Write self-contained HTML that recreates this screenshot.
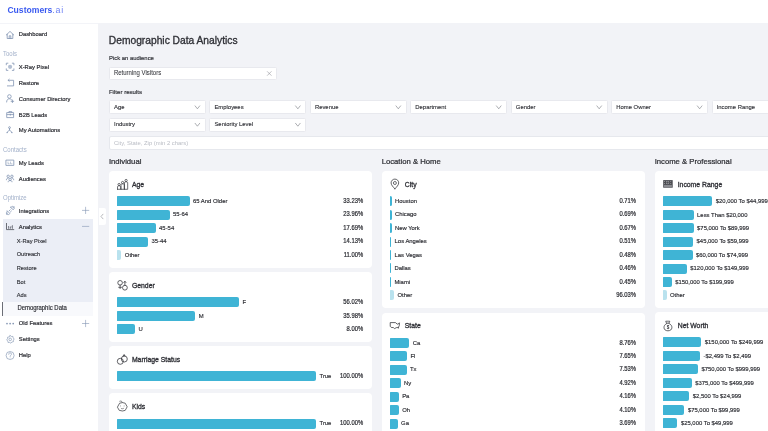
<!DOCTYPE html>
<html><head><meta charset="utf-8"><style>
html,body{margin:0;padding:0;width:768px;height:431px;overflow:hidden;background:#fff}
body{position:relative;font-family:"Liberation Sans", sans-serif}
.t{position:absolute;white-space:nowrap}
.r{position:absolute;display:block}
#w{position:absolute;left:0;top:0;width:768px;height:431px;will-change:transform}
</style></head><body><div id="w">
<div class="r" style="left:0.00px;top:0.00px;width:768.00px;height:431.00px;background:#ffffff;"></div>
<div class="r" style="left:98.00px;top:23.30px;width:670.00px;height:408.00px;background:#f2f3f7;"></div>
<div class="r" style="left:0.00px;top:22.80px;width:98.00px;height:0.80px;background:#f3f4f8;"></div>
<div class="t" style="left:7.4px;top:4px;font-size:8.6px;line-height:12.04px;font-weight:700;color:#3a5af0">Customers<span style="font-weight:400;color:#6f83f4;letter-spacing:0.75px;font-size:8.9px">.ai</span></div>
<div class="t" style="left:18.80px;top:30px;font-size:5.8px;line-height:8.12px;font-weight:400;color:#2f3036;-webkit-text-stroke:0.2px #2f3036;transform:scaleY(1.06);transform-origin:0 6px;">Dashboard</div>
<div class="t" style="left:3.00px;top:50px;font-size:6.0px;line-height:8.40px;font-weight:400;color:#a3b1ca;transform:scaleY(1.06);transform-origin:0 6px;">Tools</div>
<div class="t" style="left:18.80px;top:63px;font-size:5.8px;line-height:8.12px;font-weight:400;color:#2f3036;-webkit-text-stroke:0.2px #2f3036;transform:scaleY(1.06);transform-origin:0 6px;">X-Ray Pixel</div>
<div class="t" style="left:18.80px;top:79px;font-size:5.8px;line-height:8.12px;font-weight:400;color:#2f3036;-webkit-text-stroke:0.2px #2f3036;transform:scaleY(1.06);transform-origin:0 6px;">Restore</div>
<div class="t" style="left:18.80px;top:95px;font-size:5.8px;line-height:8.12px;font-weight:400;color:#2f3036;-webkit-text-stroke:0.2px #2f3036;transform:scaleY(1.06);transform-origin:0 6px;">Consumer Directory</div>
<div class="t" style="left:18.80px;top:111px;font-size:5.8px;line-height:8.12px;font-weight:400;color:#2f3036;-webkit-text-stroke:0.2px #2f3036;transform:scaleY(1.06);transform-origin:0 6px;">B2B Leads</div>
<div class="t" style="left:18.80px;top:126px;font-size:5.8px;line-height:8.12px;font-weight:400;color:#2f3036;-webkit-text-stroke:0.2px #2f3036;transform:scaleY(1.06);transform-origin:0 6px;">My Automations</div>
<div class="t" style="left:3.00px;top:146px;font-size:6.0px;line-height:8.40px;font-weight:400;color:#a3b1ca;transform:scaleY(1.06);transform-origin:0 6px;">Contacts</div>
<div class="t" style="left:18.80px;top:159px;font-size:5.8px;line-height:8.12px;font-weight:400;color:#2f3036;-webkit-text-stroke:0.2px #2f3036;transform:scaleY(1.06);transform-origin:0 6px;">My Leads</div>
<div class="t" style="left:18.80px;top:175px;font-size:5.8px;line-height:8.12px;font-weight:400;color:#2f3036;-webkit-text-stroke:0.2px #2f3036;transform:scaleY(1.06);transform-origin:0 6px;">Audiences</div>
<div class="t" style="left:3.00px;top:194px;font-size:6.0px;line-height:8.40px;font-weight:400;color:#a3b1ca;transform:scaleY(1.06);transform-origin:0 6px;">Optimize</div>
<div class="t" style="left:18.80px;top:207px;font-size:5.8px;line-height:8.12px;font-weight:400;color:#2f3036;-webkit-text-stroke:0.2px #2f3036;transform:scaleY(1.06);transform-origin:0 6px;">Integrations</div>
<div class="r" style="left:2.80px;top:218.90px;width:90.20px;height:82.90px;background:#ebeef6;"></div>
<div class="t" style="left:18.80px;top:223px;font-size:5.8px;line-height:8.12px;font-weight:400;color:#2f3036;-webkit-text-stroke:0.2px #2f3036;transform:scaleY(1.06);transform-origin:0 6px;">Analytics</div>
<div class="t" style="left:16.70px;top:238px;font-size:5.7px;line-height:7.98px;font-weight:400;color:#303238;-webkit-text-stroke:0.14px #303238;transform:scaleY(1.06);transform-origin:0 5px;">X-Ray Pixel</div>
<div class="t" style="left:16.70px;top:251px;font-size:5.7px;line-height:7.98px;font-weight:400;color:#303238;-webkit-text-stroke:0.14px #303238;transform:scaleY(1.06);transform-origin:0 5px;">Outreach</div>
<div class="t" style="left:16.70px;top:265px;font-size:5.7px;line-height:7.98px;font-weight:400;color:#303238;-webkit-text-stroke:0.14px #303238;transform:scaleY(1.06);transform-origin:0 5px;">Restore</div>
<div class="t" style="left:16.70px;top:279px;font-size:5.7px;line-height:7.98px;font-weight:400;color:#303238;-webkit-text-stroke:0.14px #303238;transform:scaleY(1.06);transform-origin:0 5px;">Bot</div>
<div class="t" style="left:16.70px;top:292px;font-size:5.7px;line-height:7.98px;font-weight:400;color:#303238;-webkit-text-stroke:0.14px #303238;transform:scaleY(1.06);transform-origin:0 5px;">Ads</div>
<div class="r" style="left:2.80px;top:301.80px;width:90.20px;height:13.90px;background:#f8f9fc;"></div>
<div class="r" style="left:2.10px;top:301.80px;width:1.20px;height:13.90px;background:#6b6e76;"></div>
<div class="t" style="left:17.40px;top:304px;font-size:5.95px;line-height:8.33px;font-weight:400;color:#2f3036;-webkit-text-stroke:0.17px #2f3036;transform:scaleY(1.06);transform-origin:0 6px;">Demographic Data</div>
<div class="t" style="left:18.80px;top:319px;font-size:5.8px;line-height:8.12px;font-weight:400;color:#2f3036;-webkit-text-stroke:0.2px #2f3036;transform:scaleY(1.06);transform-origin:0 6px;">Old Features</div>
<div class="t" style="left:18.80px;top:335px;font-size:5.8px;line-height:8.12px;font-weight:400;color:#2f3036;-webkit-text-stroke:0.2px #2f3036;transform:scaleY(1.06);transform-origin:0 6px;">Settings</div>
<div class="t" style="left:18.80px;top:351px;font-size:5.8px;line-height:8.12px;font-weight:400;color:#2f3036;-webkit-text-stroke:0.2px #2f3036;transform:scaleY(1.06);transform-origin:0 6px;">Help</div>
<div class="t" style="left:108.80px;top:34px;font-size:10.25px;line-height:14.35px;font-weight:400;color:#2f3036;-webkit-text-stroke:0.32px #2f3036;">Demographic Data Analytics</div>
<div class="t" style="left:109.00px;top:54px;font-size:5.9px;line-height:8.26px;font-weight:400;color:#2f3036;-webkit-text-stroke:0.17px #2f3036;transform:scaleY(1.06);transform-origin:0 6px;">Pick an audience</div>
<div class="r" style="left:109.00px;top:66.80px;width:168.00px;height:13.20px;background:#fff;border-radius:1.5px;border:0.6px solid #e8e9ee;box-sizing:border-box"></div>
<div class="t" style="left:113.90px;top:69px;font-size:6.0px;line-height:8.40px;font-weight:400;color:#34353b;-webkit-text-stroke:0.05px #34353b;transform:scaleY(1.06);transform-origin:0 6px;">Returning Visitors</div>
<div class="t" style="left:108.90px;top:88px;font-size:6.1px;line-height:8.54px;font-weight:400;color:#2f3036;-webkit-text-stroke:0.17px #2f3036;">Filter results</div>
<div class="r" style="left:108.90px;top:100.30px;width:97.00px;height:13.90px;background:#fff;border-radius:1.5px;border:0.6px solid #e8e9ee;box-sizing:border-box"></div>
<div class="t" style="left:114.00px;top:103px;font-size:5.9px;line-height:8.26px;font-weight:400;color:#2f3036;-webkit-text-stroke:0.12px #2f3036;transform:scaleY(1.06);transform-origin:0 6px;">Age</div>
<div class="r" style="left:209.35px;top:100.30px;width:97.00px;height:13.90px;background:#fff;border-radius:1.5px;border:0.6px solid #e8e9ee;box-sizing:border-box"></div>
<div class="t" style="left:214.45px;top:103px;font-size:5.9px;line-height:8.26px;font-weight:400;color:#2f3036;-webkit-text-stroke:0.12px #2f3036;transform:scaleY(1.06);transform-origin:0 6px;">Employees</div>
<div class="r" style="left:309.80px;top:100.30px;width:97.00px;height:13.90px;background:#fff;border-radius:1.5px;border:0.6px solid #e8e9ee;box-sizing:border-box"></div>
<div class="t" style="left:314.90px;top:103px;font-size:5.9px;line-height:8.26px;font-weight:400;color:#2f3036;-webkit-text-stroke:0.12px #2f3036;transform:scaleY(1.06);transform-origin:0 6px;">Revenue</div>
<div class="r" style="left:410.25px;top:100.30px;width:97.00px;height:13.90px;background:#fff;border-radius:1.5px;border:0.6px solid #e8e9ee;box-sizing:border-box"></div>
<div class="t" style="left:415.35px;top:103px;font-size:5.9px;line-height:8.26px;font-weight:400;color:#2f3036;-webkit-text-stroke:0.12px #2f3036;transform:scaleY(1.06);transform-origin:0 6px;">Department</div>
<div class="r" style="left:510.70px;top:100.30px;width:97.00px;height:13.90px;background:#fff;border-radius:1.5px;border:0.6px solid #e8e9ee;box-sizing:border-box"></div>
<div class="t" style="left:515.80px;top:103px;font-size:5.9px;line-height:8.26px;font-weight:400;color:#2f3036;-webkit-text-stroke:0.12px #2f3036;transform:scaleY(1.06);transform-origin:0 6px;">Gender</div>
<div class="r" style="left:611.15px;top:100.30px;width:97.00px;height:13.90px;background:#fff;border-radius:1.5px;border:0.6px solid #e8e9ee;box-sizing:border-box"></div>
<div class="t" style="left:616.25px;top:103px;font-size:5.9px;line-height:8.26px;font-weight:400;color:#2f3036;-webkit-text-stroke:0.12px #2f3036;transform:scaleY(1.06);transform-origin:0 6px;">Home Owner</div>
<div class="r" style="left:711.60px;top:100.30px;width:97.00px;height:13.90px;background:#fff;border-radius:1.5px;border:0.6px solid #e8e9ee;box-sizing:border-box"></div>
<div class="t" style="left:716.70px;top:103px;font-size:5.9px;line-height:8.26px;font-weight:400;color:#2f3036;-webkit-text-stroke:0.12px #2f3036;transform:scaleY(1.06);transform-origin:0 6px;">Income Range</div>
<div class="r" style="left:108.90px;top:117.70px;width:97.00px;height:13.90px;background:#fff;border-radius:1.5px;border:0.6px solid #e8e9ee;box-sizing:border-box"></div>
<div class="t" style="left:114.00px;top:120px;font-size:5.9px;line-height:8.26px;font-weight:400;color:#2f3036;-webkit-text-stroke:0.12px #2f3036;transform:scaleY(1.06);transform-origin:0 6px;">Industry</div>
<div class="r" style="left:209.35px;top:117.70px;width:97.00px;height:13.90px;background:#fff;border-radius:1.5px;border:0.6px solid #e8e9ee;box-sizing:border-box"></div>
<div class="t" style="left:214.45px;top:120px;font-size:5.9px;line-height:8.26px;font-weight:400;color:#2f3036;-webkit-text-stroke:0.12px #2f3036;transform:scaleY(1.06);transform-origin:0 6px;">Seniority Level</div>
<div class="r" style="left:108.90px;top:135.50px;width:700.00px;height:14.00px;background:#fff;border:0.6px solid #e6e8ed;box-sizing:border-box;border-radius:2px"></div>
<div class="t" style="left:114.00px;top:139px;font-size:5.9px;line-height:8.26px;font-weight:400;color:#b9bcc4;transform:scaleY(1.06);transform-origin:0 6px;">City, State, Zip (min 2 chars)</div>
<div class="r" style="left:98.80px;top:208.00px;width:7.00px;height:16.70px;background:#fff;border-radius:0 2px 2px 0"></div>
<div class="t" style="left:108.90px;top:157px;font-size:7.7px;line-height:10.78px;font-weight:400;color:#2f3036;-webkit-text-stroke:0.24px #2f3036;">Individual</div>
<div class="t" style="left:381.70px;top:157px;font-size:7.7px;line-height:10.78px;font-weight:400;color:#2f3036;-webkit-text-stroke:0.24px #2f3036;">Location &amp; Home</div>
<div class="t" style="left:654.70px;top:157px;font-size:7.7px;line-height:10.78px;font-weight:400;color:#2f3036;-webkit-text-stroke:0.24px #2f3036;">Income &amp; Professional</div>
<div class="r" style="left:108.90px;top:170.90px;width:262.80px;height:97.10px;background:#fff;border-radius:4px"></div>
<div class="t" style="left:131.90px;top:180px;font-size:6.85px;line-height:9.59px;font-weight:400;color:#2f3036;-webkit-text-stroke:0.3px #2f3036;transform:scaleY(1.06);transform-origin:0 7px;">Age</div>
<div class="r" style="left:117.10px;top:196.10px;width:72.50px;height:10.00px;background:#3fb4d5;border-radius:0.6px 2px 2px 0.6px"></div>
<div class="t" style="left:193.00px;top:197px;font-size:5.9px;line-height:8.26px;font-weight:400;color:#2a2b31;-webkit-text-stroke:0.15px #2a2b31;transform:scaleY(1.06);transform-origin:0 6px;">65 And Older</div>
<div class="t" style="right:404.90px;top:197px;font-size:5.85px;line-height:8.19px;font-weight:400;color:#2f3036;-webkit-text-stroke:0.2px #2f3036;transform:scaleY(1.18);transform-origin:50% 70%;">33.23%</div>
<div class="r" style="left:117.10px;top:209.57px;width:52.50px;height:10.00px;background:#3fb4d5;border-radius:0.6px 2px 2px 0.6px"></div>
<div class="t" style="left:173.00px;top:210px;font-size:5.9px;line-height:8.26px;font-weight:400;color:#2a2b31;-webkit-text-stroke:0.15px #2a2b31;transform:scaleY(1.06);transform-origin:0 6px;">55-64</div>
<div class="t" style="right:404.90px;top:210px;font-size:5.85px;line-height:8.19px;font-weight:400;color:#2f3036;-webkit-text-stroke:0.2px #2f3036;transform:scaleY(1.18);transform-origin:50% 70%;">23.96%</div>
<div class="r" style="left:117.10px;top:223.04px;width:38.60px;height:10.00px;background:#3fb4d5;border-radius:0.6px 2px 2px 0.6px"></div>
<div class="t" style="left:159.10px;top:224px;font-size:5.9px;line-height:8.26px;font-weight:400;color:#2a2b31;-webkit-text-stroke:0.15px #2a2b31;transform:scaleY(1.06);transform-origin:0 6px;">45-54</div>
<div class="t" style="right:404.90px;top:224px;font-size:5.85px;line-height:8.19px;font-weight:400;color:#2f3036;-webkit-text-stroke:0.2px #2f3036;transform:scaleY(1.18);transform-origin:50% 70%;">17.69%</div>
<div class="r" style="left:117.10px;top:236.51px;width:30.90px;height:10.00px;background:#3fb4d5;border-radius:0.6px 2px 2px 0.6px"></div>
<div class="t" style="left:151.40px;top:237px;font-size:5.9px;line-height:8.26px;font-weight:400;color:#2a2b31;-webkit-text-stroke:0.15px #2a2b31;transform:scaleY(1.06);transform-origin:0 6px;">35-44</div>
<div class="t" style="right:404.90px;top:237px;font-size:5.85px;line-height:8.19px;font-weight:400;color:#2f3036;-webkit-text-stroke:0.2px #2f3036;transform:scaleY(1.18);transform-origin:50% 70%;">14.13%</div>
<div class="r" style="left:117.10px;top:249.98px;width:4.30px;height:10.00px;background:#b9e2ee;border-radius:0.6px 2px 2px 0.6px"></div>
<div class="t" style="left:124.80px;top:251px;font-size:5.9px;line-height:8.26px;font-weight:400;color:#2a2b31;-webkit-text-stroke:0.15px #2a2b31;transform:scaleY(1.06);transform-origin:0 6px;">Other</div>
<div class="t" style="right:404.90px;top:251px;font-size:5.85px;line-height:8.19px;font-weight:400;color:#2f3036;-webkit-text-stroke:0.2px #2f3036;transform:scaleY(1.18);transform-origin:50% 70%;">11.00%</div>
<div class="r" style="left:108.90px;top:272.10px;width:262.80px;height:69.50px;background:#fff;border-radius:4px"></div>
<div class="t" style="left:131.90px;top:281px;font-size:6.85px;line-height:9.59px;font-weight:400;color:#2f3036;-webkit-text-stroke:0.3px #2f3036;transform:scaleY(1.06);transform-origin:0 7px;">Gender</div>
<div class="r" style="left:117.10px;top:297.30px;width:121.90px;height:10.00px;background:#3fb4d5;border-radius:0.6px 2px 2px 0.6px"></div>
<div class="t" style="left:242.40px;top:298px;font-size:5.9px;line-height:8.26px;font-weight:400;color:#2a2b31;-webkit-text-stroke:0.15px #2a2b31;transform:scaleY(1.06);transform-origin:0 6px;">F</div>
<div class="t" style="right:404.90px;top:298px;font-size:5.85px;line-height:8.19px;font-weight:400;color:#2f3036;-webkit-text-stroke:0.2px #2f3036;transform:scaleY(1.18);transform-origin:50% 70%;">56.02%</div>
<div class="r" style="left:117.10px;top:310.77px;width:78.30px;height:10.00px;background:#3fb4d5;border-radius:0.6px 2px 2px 0.6px"></div>
<div class="t" style="left:198.80px;top:312px;font-size:5.9px;line-height:8.26px;font-weight:400;color:#2a2b31;-webkit-text-stroke:0.15px #2a2b31;transform:scaleY(1.06);transform-origin:0 6px;">M</div>
<div class="t" style="right:404.90px;top:312px;font-size:5.85px;line-height:8.19px;font-weight:400;color:#2f3036;-webkit-text-stroke:0.2px #2f3036;transform:scaleY(1.18);transform-origin:50% 70%;">35.98%</div>
<div class="r" style="left:117.10px;top:324.24px;width:17.90px;height:10.00px;background:#3fb4d5;border-radius:0.6px 2px 2px 0.6px"></div>
<div class="t" style="left:138.40px;top:325px;font-size:5.9px;line-height:8.26px;font-weight:400;color:#2a2b31;-webkit-text-stroke:0.15px #2a2b31;transform:scaleY(1.06);transform-origin:0 6px;">U</div>
<div class="t" style="right:404.90px;top:325px;font-size:5.85px;line-height:8.19px;font-weight:400;color:#2f3036;-webkit-text-stroke:0.2px #2f3036;transform:scaleY(1.18);transform-origin:50% 70%;">8.00%</div>
<div class="r" style="left:108.90px;top:346.10px;width:262.80px;height:42.80px;background:#fff;border-radius:4px"></div>
<div class="t" style="left:131.90px;top:355px;font-size:6.85px;line-height:9.59px;font-weight:400;color:#2f3036;-webkit-text-stroke:0.3px #2f3036;transform:scaleY(1.06);transform-origin:0 7px;">Marriage Status</div>
<div class="r" style="left:117.10px;top:371.30px;width:199.00px;height:10.00px;background:#3fb4d5;border-radius:0.6px 2px 2px 0.6px"></div>
<div class="t" style="left:319.50px;top:372px;font-size:5.9px;line-height:8.26px;font-weight:400;color:#2a2b31;-webkit-text-stroke:0.15px #2a2b31;transform:scaleY(1.06);transform-origin:0 6px;">True</div>
<div class="t" style="right:404.90px;top:372px;font-size:5.85px;line-height:8.19px;font-weight:400;color:#2f3036;-webkit-text-stroke:0.2px #2f3036;transform:scaleY(1.18);transform-origin:50% 70%;">100.00%</div>
<div class="r" style="left:108.90px;top:393.40px;width:262.80px;height:60.00px;background:#fff;border-radius:4px"></div>
<div class="t" style="left:131.90px;top:402px;font-size:6.85px;line-height:9.59px;font-weight:400;color:#2f3036;-webkit-text-stroke:0.3px #2f3036;transform:scaleY(1.06);transform-origin:0 7px;">Kids</div>
<div class="r" style="left:117.10px;top:418.60px;width:199.00px;height:10.00px;background:#3fb4d5;border-radius:0.6px 2px 2px 0.6px"></div>
<div class="t" style="left:319.50px;top:419px;font-size:5.9px;line-height:8.26px;font-weight:400;color:#2a2b31;-webkit-text-stroke:0.15px #2a2b31;transform:scaleY(1.06);transform-origin:0 6px;">True</div>
<div class="t" style="right:404.90px;top:419px;font-size:5.85px;line-height:8.19px;font-weight:400;color:#2f3036;-webkit-text-stroke:0.2px #2f3036;transform:scaleY(1.18);transform-origin:50% 70%;">100.00%</div>
<div class="r" style="left:381.80px;top:170.90px;width:262.80px;height:137.50px;background:#fff;border-radius:4px"></div>
<div class="t" style="left:404.80px;top:180px;font-size:6.85px;line-height:9.59px;font-weight:400;color:#2f3036;-webkit-text-stroke:0.3px #2f3036;transform:scaleY(1.06);transform-origin:0 7px;">City</div>
<div class="r" style="left:390.00px;top:196.10px;width:1.60px;height:10.00px;background:#3fb4d5;border-radius:0.6px 2px 2px 0.6px"></div>
<div class="t" style="left:395.00px;top:197px;font-size:5.9px;line-height:8.26px;font-weight:400;color:#2a2b31;-webkit-text-stroke:0.15px #2a2b31;transform:scaleY(1.06);transform-origin:0 6px;">Houston</div>
<div class="t" style="right:132.00px;top:197px;font-size:5.85px;line-height:8.19px;font-weight:400;color:#2f3036;-webkit-text-stroke:0.2px #2f3036;transform:scaleY(1.18);transform-origin:50% 70%;">0.71%</div>
<div class="r" style="left:390.00px;top:209.57px;width:1.50px;height:10.00px;background:#3fb4d5;border-radius:0.6px 2px 2px 0.6px"></div>
<div class="t" style="left:394.90px;top:210px;font-size:5.9px;line-height:8.26px;font-weight:400;color:#2a2b31;-webkit-text-stroke:0.15px #2a2b31;transform:scaleY(1.06);transform-origin:0 6px;">Chicago</div>
<div class="t" style="right:132.00px;top:210px;font-size:5.85px;line-height:8.19px;font-weight:400;color:#2f3036;-webkit-text-stroke:0.2px #2f3036;transform:scaleY(1.18);transform-origin:50% 70%;">0.69%</div>
<div class="r" style="left:390.00px;top:223.04px;width:1.50px;height:10.00px;background:#3fb4d5;border-radius:0.6px 2px 2px 0.6px"></div>
<div class="t" style="left:394.90px;top:224px;font-size:5.9px;line-height:8.26px;font-weight:400;color:#2a2b31;-webkit-text-stroke:0.15px #2a2b31;transform:scaleY(1.06);transform-origin:0 6px;">New York</div>
<div class="t" style="right:132.00px;top:224px;font-size:5.85px;line-height:8.19px;font-weight:400;color:#2f3036;-webkit-text-stroke:0.2px #2f3036;transform:scaleY(1.18);transform-origin:50% 70%;">0.67%</div>
<div class="r" style="left:390.00px;top:236.51px;width:1.20px;height:10.00px;background:#3fb4d5;border-radius:0.6px 2px 2px 0.6px"></div>
<div class="t" style="left:394.60px;top:237px;font-size:5.9px;line-height:8.26px;font-weight:400;color:#2a2b31;-webkit-text-stroke:0.15px #2a2b31;transform:scaleY(1.06);transform-origin:0 6px;">Los Angeles</div>
<div class="t" style="right:132.00px;top:237px;font-size:5.85px;line-height:8.19px;font-weight:400;color:#2f3036;-webkit-text-stroke:0.2px #2f3036;transform:scaleY(1.18);transform-origin:50% 70%;">0.51%</div>
<div class="r" style="left:390.00px;top:249.98px;width:1.10px;height:10.00px;background:#3fb4d5;border-radius:0.6px 2px 2px 0.6px"></div>
<div class="t" style="left:394.50px;top:251px;font-size:5.9px;line-height:8.26px;font-weight:400;color:#2a2b31;-webkit-text-stroke:0.15px #2a2b31;transform:scaleY(1.06);transform-origin:0 6px;">Las Vegas</div>
<div class="t" style="right:132.00px;top:251px;font-size:5.85px;line-height:8.19px;font-weight:400;color:#2f3036;-webkit-text-stroke:0.2px #2f3036;transform:scaleY(1.18);transform-origin:50% 70%;">0.48%</div>
<div class="r" style="left:390.00px;top:263.45px;width:1.00px;height:10.00px;background:#3fb4d5;border-radius:0.6px 2px 2px 0.6px"></div>
<div class="t" style="left:394.40px;top:264px;font-size:5.9px;line-height:8.26px;font-weight:400;color:#2a2b31;-webkit-text-stroke:0.15px #2a2b31;transform:scaleY(1.06);transform-origin:0 6px;">Dallas</div>
<div class="t" style="right:132.00px;top:264px;font-size:5.85px;line-height:8.19px;font-weight:400;color:#2f3036;-webkit-text-stroke:0.2px #2f3036;transform:scaleY(1.18);transform-origin:50% 70%;">0.46%</div>
<div class="r" style="left:390.00px;top:276.92px;width:1.00px;height:10.00px;background:#3fb4d5;border-radius:0.6px 2px 2px 0.6px"></div>
<div class="t" style="left:394.40px;top:278px;font-size:5.9px;line-height:8.26px;font-weight:400;color:#2a2b31;-webkit-text-stroke:0.15px #2a2b31;transform:scaleY(1.06);transform-origin:0 6px;">Miami</div>
<div class="t" style="right:132.00px;top:278px;font-size:5.85px;line-height:8.19px;font-weight:400;color:#2f3036;-webkit-text-stroke:0.2px #2f3036;transform:scaleY(1.18);transform-origin:50% 70%;">0.45%</div>
<div class="r" style="left:390.00px;top:290.39px;width:4.10px;height:10.00px;background:#b9e2ee;border-radius:0.6px 2px 2px 0.6px"></div>
<div class="t" style="left:397.50px;top:291px;font-size:5.9px;line-height:8.26px;font-weight:400;color:#2a2b31;-webkit-text-stroke:0.15px #2a2b31;transform:scaleY(1.06);transform-origin:0 6px;">Other</div>
<div class="t" style="right:132.00px;top:291px;font-size:5.85px;line-height:8.19px;font-weight:400;color:#2f3036;-webkit-text-stroke:0.2px #2f3036;transform:scaleY(1.18);transform-origin:50% 70%;">96.03%</div>
<div class="r" style="left:381.80px;top:312.50px;width:262.80px;height:130.00px;background:#fff;border-radius:4px"></div>
<div class="t" style="left:404.80px;top:321px;font-size:6.85px;line-height:9.59px;font-weight:400;color:#2f3036;-webkit-text-stroke:0.3px #2f3036;transform:scaleY(1.06);transform-origin:0 7px;">State</div>
<div class="r" style="left:390.00px;top:337.70px;width:19.40px;height:10.00px;background:#3fb4d5;border-radius:0.6px 2px 2px 0.6px"></div>
<div class="t" style="left:412.80px;top:339px;font-size:5.9px;line-height:8.26px;font-weight:400;color:#2a2b31;-webkit-text-stroke:0.15px #2a2b31;transform:scaleY(1.06);transform-origin:0 6px;">Ca</div>
<div class="t" style="right:132.00px;top:339px;font-size:5.85px;line-height:8.19px;font-weight:400;color:#2f3036;-webkit-text-stroke:0.2px #2f3036;transform:scaleY(1.18);transform-origin:50% 70%;">8.76%</div>
<div class="r" style="left:390.00px;top:351.17px;width:17.10px;height:10.00px;background:#3fb4d5;border-radius:0.6px 2px 2px 0.6px"></div>
<div class="t" style="left:410.50px;top:352px;font-size:5.9px;line-height:8.26px;font-weight:400;color:#2a2b31;-webkit-text-stroke:0.15px #2a2b31;transform:scaleY(1.06);transform-origin:0 6px;">Fl</div>
<div class="t" style="right:132.00px;top:352px;font-size:5.85px;line-height:8.19px;font-weight:400;color:#2f3036;-webkit-text-stroke:0.2px #2f3036;transform:scaleY(1.18);transform-origin:50% 70%;">7.65%</div>
<div class="r" style="left:390.00px;top:364.64px;width:16.60px;height:10.00px;background:#3fb4d5;border-radius:0.6px 2px 2px 0.6px"></div>
<div class="t" style="left:410.00px;top:365px;font-size:5.9px;line-height:8.26px;font-weight:400;color:#2a2b31;-webkit-text-stroke:0.15px #2a2b31;transform:scaleY(1.06);transform-origin:0 6px;">Tx</div>
<div class="t" style="right:132.00px;top:365px;font-size:5.85px;line-height:8.19px;font-weight:400;color:#2f3036;-webkit-text-stroke:0.2px #2f3036;transform:scaleY(1.18);transform-origin:50% 70%;">7.53%</div>
<div class="r" style="left:390.00px;top:378.11px;width:10.70px;height:10.00px;background:#3fb4d5;border-radius:0.6px 2px 2px 0.6px"></div>
<div class="t" style="left:404.10px;top:379px;font-size:5.9px;line-height:8.26px;font-weight:400;color:#2a2b31;-webkit-text-stroke:0.15px #2a2b31;transform:scaleY(1.06);transform-origin:0 6px;">Ny</div>
<div class="t" style="right:132.00px;top:379px;font-size:5.85px;line-height:8.19px;font-weight:400;color:#2f3036;-webkit-text-stroke:0.2px #2f3036;transform:scaleY(1.18);transform-origin:50% 70%;">4.92%</div>
<div class="r" style="left:390.00px;top:391.58px;width:8.80px;height:10.00px;background:#3fb4d5;border-radius:0.6px 2px 2px 0.6px"></div>
<div class="t" style="left:402.20px;top:392px;font-size:5.9px;line-height:8.26px;font-weight:400;color:#2a2b31;-webkit-text-stroke:0.15px #2a2b31;transform:scaleY(1.06);transform-origin:0 6px;">Pa</div>
<div class="t" style="right:132.00px;top:392px;font-size:5.85px;line-height:8.19px;font-weight:400;color:#2f3036;-webkit-text-stroke:0.2px #2f3036;transform:scaleY(1.18);transform-origin:50% 70%;">4.16%</div>
<div class="r" style="left:390.00px;top:405.05px;width:8.80px;height:10.00px;background:#3fb4d5;border-radius:0.6px 2px 2px 0.6px"></div>
<div class="t" style="left:402.20px;top:406px;font-size:5.9px;line-height:8.26px;font-weight:400;color:#2a2b31;-webkit-text-stroke:0.15px #2a2b31;transform:scaleY(1.06);transform-origin:0 6px;">Oh</div>
<div class="t" style="right:132.00px;top:406px;font-size:5.85px;line-height:8.19px;font-weight:400;color:#2f3036;-webkit-text-stroke:0.2px #2f3036;transform:scaleY(1.18);transform-origin:50% 70%;">4.10%</div>
<div class="r" style="left:390.00px;top:418.52px;width:7.70px;height:10.00px;background:#3fb4d5;border-radius:0.6px 2px 2px 0.6px"></div>
<div class="t" style="left:401.10px;top:419px;font-size:5.9px;line-height:8.26px;font-weight:400;color:#2a2b31;-webkit-text-stroke:0.15px #2a2b31;transform:scaleY(1.06);transform-origin:0 6px;">Ga</div>
<div class="t" style="right:132.00px;top:419px;font-size:5.85px;line-height:8.19px;font-weight:400;color:#2f3036;-webkit-text-stroke:0.2px #2f3036;transform:scaleY(1.18);transform-origin:50% 70%;">3.69%</div>
<div class="r" style="left:654.70px;top:171.00px;width:262.80px;height:137.10px;background:#fff;border-radius:4px"></div>
<div class="t" style="left:677.70px;top:180px;font-size:6.85px;line-height:9.59px;font-weight:400;color:#2f3036;-webkit-text-stroke:0.3px #2f3036;transform:scaleY(1.06);transform-origin:0 7px;">Income Range</div>
<div class="r" style="left:662.90px;top:196.20px;width:49.50px;height:10.00px;background:#3fb4d5;border-radius:0.6px 2px 2px 0.6px"></div>
<div class="t" style="left:715.80px;top:197px;font-size:5.9px;line-height:8.26px;font-weight:400;color:#2a2b31;-webkit-text-stroke:0.15px #2a2b31;transform:scaleY(1.06);transform-origin:0 6px;">$20,000 To $44,999</div>
<div class="r" style="left:662.90px;top:209.67px;width:30.80px;height:10.00px;background:#3fb4d5;border-radius:0.6px 2px 2px 0.6px"></div>
<div class="t" style="left:697.10px;top:211px;font-size:5.9px;line-height:8.26px;font-weight:400;color:#2a2b31;-webkit-text-stroke:0.15px #2a2b31;transform:scaleY(1.06);transform-origin:0 6px;">Less Than $20,000</div>
<div class="r" style="left:662.90px;top:223.14px;width:30.80px;height:10.00px;background:#3fb4d5;border-radius:0.6px 2px 2px 0.6px"></div>
<div class="t" style="left:697.10px;top:224px;font-size:5.9px;line-height:8.26px;font-weight:400;color:#2a2b31;-webkit-text-stroke:0.15px #2a2b31;transform:scaleY(1.06);transform-origin:0 6px;">$75,000 To $89,999</div>
<div class="r" style="left:662.90px;top:236.61px;width:30.30px;height:10.00px;background:#3fb4d5;border-radius:0.6px 2px 2px 0.6px"></div>
<div class="t" style="left:696.60px;top:237px;font-size:5.9px;line-height:8.26px;font-weight:400;color:#2a2b31;-webkit-text-stroke:0.15px #2a2b31;transform:scaleY(1.06);transform-origin:0 6px;">$45,000 To $59,999</div>
<div class="r" style="left:662.90px;top:250.08px;width:29.70px;height:10.00px;background:#3fb4d5;border-radius:0.6px 2px 2px 0.6px"></div>
<div class="t" style="left:696.00px;top:251px;font-size:5.9px;line-height:8.26px;font-weight:400;color:#2a2b31;-webkit-text-stroke:0.15px #2a2b31;transform:scaleY(1.06);transform-origin:0 6px;">$60,000 To $74,999</div>
<div class="r" style="left:662.90px;top:263.55px;width:24.00px;height:10.00px;background:#3fb4d5;border-radius:0.6px 2px 2px 0.6px"></div>
<div class="t" style="left:690.30px;top:264px;font-size:5.9px;line-height:8.26px;font-weight:400;color:#2a2b31;-webkit-text-stroke:0.15px #2a2b31;transform:scaleY(1.06);transform-origin:0 6px;">$120,000 To $149,999</div>
<div class="r" style="left:662.90px;top:277.02px;width:8.90px;height:10.00px;background:#3fb4d5;border-radius:0.6px 2px 2px 0.6px"></div>
<div class="t" style="left:675.20px;top:278px;font-size:5.9px;line-height:8.26px;font-weight:400;color:#2a2b31;-webkit-text-stroke:0.15px #2a2b31;transform:scaleY(1.06);transform-origin:0 6px;">$150,000 To $199,999</div>
<div class="r" style="left:662.90px;top:290.49px;width:3.70px;height:10.00px;background:#b9e2ee;border-radius:0.6px 2px 2px 0.6px"></div>
<div class="t" style="left:670.00px;top:291px;font-size:5.9px;line-height:8.26px;font-weight:400;color:#2a2b31;-webkit-text-stroke:0.15px #2a2b31;transform:scaleY(1.06);transform-origin:0 6px;">Other</div>
<div class="r" style="left:654.70px;top:312.20px;width:262.80px;height:130.00px;background:#fff;border-radius:4px"></div>
<div class="t" style="left:677.70px;top:321px;font-size:6.85px;line-height:9.59px;font-weight:400;color:#2f3036;-webkit-text-stroke:0.3px #2f3036;transform:scaleY(1.06);transform-origin:0 7px;">Net Worth</div>
<div class="r" style="left:662.90px;top:337.40px;width:38.50px;height:10.00px;background:#3fb4d5;border-radius:0.6px 2px 2px 0.6px"></div>
<div class="t" style="left:704.80px;top:338px;font-size:5.9px;line-height:8.26px;font-weight:400;color:#2a2b31;-webkit-text-stroke:0.15px #2a2b31;transform:scaleY(1.06);transform-origin:0 6px;">$150,000 To $249,999</div>
<div class="r" style="left:662.90px;top:350.87px;width:37.30px;height:10.00px;background:#3fb4d5;border-radius:0.6px 2px 2px 0.6px"></div>
<div class="t" style="left:703.60px;top:352px;font-size:5.9px;line-height:8.26px;font-weight:400;color:#2a2b31;-webkit-text-stroke:0.15px #2a2b31;transform:scaleY(1.06);transform-origin:0 6px;">-$2,499 To $2,499</div>
<div class="r" style="left:662.90px;top:364.34px;width:35.20px;height:10.00px;background:#3fb4d5;border-radius:0.6px 2px 2px 0.6px"></div>
<div class="t" style="left:701.50px;top:365px;font-size:5.9px;line-height:8.26px;font-weight:400;color:#2a2b31;-webkit-text-stroke:0.15px #2a2b31;transform:scaleY(1.06);transform-origin:0 6px;">$750,000 To $999,999</div>
<div class="r" style="left:662.90px;top:377.81px;width:28.90px;height:10.00px;background:#3fb4d5;border-radius:0.6px 2px 2px 0.6px"></div>
<div class="t" style="left:695.20px;top:379px;font-size:5.9px;line-height:8.26px;font-weight:400;color:#2a2b31;-webkit-text-stroke:0.15px #2a2b31;transform:scaleY(1.06);transform-origin:0 6px;">$375,000 To $499,999</div>
<div class="r" style="left:662.90px;top:391.28px;width:26.40px;height:10.00px;background:#3fb4d5;border-radius:0.6px 2px 2px 0.6px"></div>
<div class="t" style="left:692.70px;top:392px;font-size:5.9px;line-height:8.26px;font-weight:400;color:#2a2b31;-webkit-text-stroke:0.15px #2a2b31;transform:scaleY(1.06);transform-origin:0 6px;">$2,500 To $24,999</div>
<div class="r" style="left:662.90px;top:404.75px;width:21.60px;height:10.00px;background:#3fb4d5;border-radius:0.6px 2px 2px 0.6px"></div>
<div class="t" style="left:687.90px;top:406px;font-size:5.9px;line-height:8.26px;font-weight:400;color:#2a2b31;-webkit-text-stroke:0.15px #2a2b31;transform:scaleY(1.06);transform-origin:0 6px;">$75,000 To $99,999</div>
<div class="r" style="left:662.90px;top:418.22px;width:14.60px;height:10.00px;background:#3fb4d5;border-radius:0.6px 2px 2px 0.6px"></div>
<div class="t" style="left:680.90px;top:419px;font-size:5.9px;line-height:8.26px;font-weight:400;color:#2a2b31;-webkit-text-stroke:0.15px #2a2b31;transform:scaleY(1.06);transform-origin:0 6px;">$25,000 To $49,999</div>
<svg class="r" style="left:0;top:0" width="768" height="431" viewBox="0 0 768 431"><path d="M6.3 35 L10 31.4 L13.7 35 M7.2 34.2 V38.5 H12.8 V34.2 M9.2 38.5 V35.8 H10.8 V38.5" fill="none" stroke="#8294b2" stroke-width="0.8" stroke-linecap="round" stroke-linejoin="round" /><path d="M6.3 64.8 V63.2 H7.9 M12.3 63.2 H13.9 V64.8 M13.9 68.8 V70.4 H12.3 M7.9 70.4 H6.3 V68.8" fill="none" stroke="#8294b2" stroke-width="0.8" stroke-linecap="round" stroke-linejoin="round" /><circle cx="10.1" cy="66.8" r="2.1" fill="#b3bfd2"/><path d="M8.2 80.3 H13.6 V85.9 H7.4" fill="none" stroke="#8294b2" stroke-width="0.8" stroke-linecap="round" stroke-linejoin="round" /><path d="M9.2 79.3 L8.1 80.3 L9.2 81.3" fill="none" stroke="#8294b2" stroke-width="0.8" stroke-linecap="round" stroke-linejoin="round" /><circle cx="9.4" cy="96.5" r="1.8" fill="none" stroke="#8294b2" stroke-width="0.8"/><path d="M6.6 102 C6.6 99.8 8 98.8 9.4 98.8 C10.3 98.8 11 99.1 11.5 99.6" fill="none" stroke="#8294b2" stroke-width="0.8" stroke-linecap="round" stroke-linejoin="round" /><path d="M12.4 100 V102.6 M11.1 101.3 H13.7" fill="none" stroke="#8294b2" stroke-width="0.8" stroke-linecap="round" stroke-linejoin="round" /><path d="M7.1 112.6 H13.6 V117.6 H7.1 Z M8.9 112.6 V111.6 H11.8 V112.6 M7.1 114.6 H13.6 M10.3 114.2 V115.2" fill="none" stroke="#8294b2" stroke-width="0.8" stroke-linecap="round" stroke-linejoin="round" /><circle cx="9.5" cy="127.6" r="0.9" fill="none" stroke="#8294b2" stroke-width="0.8"/><path d="M9.5 128.5 V130 M9.5 130 L7.2 132.2 M9.5 130 L11.8 132.2 M6.8 132.6 H7.6 M11.4 132.6 H12.2" fill="none" stroke="#8294b2" stroke-width="0.8" stroke-linecap="round" stroke-linejoin="round" /><path d="M6.3 160.1 H13.8 V165.4 H6.3 Z" fill="none" stroke="#8294b2" stroke-width="0.8" stroke-linecap="round" stroke-linejoin="round" /><path d="M8 162 V163.8 H9.2 M10.5 162 V163.8 H12" fill="none" stroke="#8294b2" stroke-width="0.5" stroke-linecap="round" stroke-linejoin="round" /><circle cx="8.2" cy="176.3" r="1.2" fill="none" stroke="#8294b2" stroke-width="0.8"/><circle cx="11.9" cy="176.3" r="1.2" fill="none" stroke="#8294b2" stroke-width="0.8"/><circle cx="10.1" cy="179.4" r="1.2" fill="none" stroke="#8294b2" stroke-width="0.8"/><path d="M6.4 179.8 C6.4 178.6 7.3 178 8.2 178 M13.7 179.8 C13.7 178.6 12.8 178 11.9 178 M8.2 181.8 C8.2 180.8 9 180.6 10.1 180.6 C11.2 180.6 12 180.8 12 181.8" fill="none" stroke="#8294b2" stroke-width="0.8" stroke-linecap="round" stroke-linejoin="round" /><path d="M6.4 214.3 L7.7 213 M12.7 208 L14 206.7" fill="none" stroke="#8294b2" stroke-width="0.8" stroke-linecap="round" stroke-linejoin="round" /><path d="M7.4 211 L9.9 213.5 L9.1 214.2 C8.5 214.8 7.6 214.8 7 214.2 L6.8 214 C6.2 213.4 6.2 212.5 6.8 211.9 Z" fill="none" stroke="#8294b2" stroke-width="0.8" stroke-linecap="round" stroke-linejoin="round" /><path d="M10.6 207.3 L13.1 209.8 L13.8 209.1 C14.4 208.5 14.4 207.6 13.8 207 L13.6 206.8 C13 206.2 12.1 206.2 11.5 206.8 Z" fill="none" stroke="#8294b2" stroke-width="0.8" stroke-linecap="round" stroke-linejoin="round" /><path d="M9.2 210.8 L10.2 209.8 M10.4 212 L11.4 211" fill="none" stroke="#8294b2" stroke-width="0.8" stroke-linecap="round" stroke-linejoin="round" /><path d="M6.5 223.4 V229.6 H13.8" fill="none" stroke="#4b4e57" stroke-width="0.8" stroke-linecap="round" stroke-linejoin="round" /><path d="M8.6 228.4 V226.4 M10.3 228.4 V226.9 H11.2 M12.4 228.4 V225.6" fill="none" stroke="#4b4e57" stroke-width="0.7" stroke-linecap="round" stroke-linejoin="round" /><circle cx="7.0" cy="323.6" r="0.85" fill="#8294b2"/><circle cx="10.1" cy="323.6" r="0.85" fill="#8294b2"/><circle cx="13.2" cy="323.6" r="0.85" fill="#8294b2"/><path d="M10.2 335.5 L11.4 336.5 L12.9 336.4 L13.2 337.9 L14.2 339 L13.4 340.2 L13.4 341.7 L11.9 342 L10.8 343.2 L9.6 342.4 L8.1 342.5 L7.8 341 L6.7 339.9 L7.5 338.7 L7.6 337.2 L9.1 336.9 Z" fill="none" stroke="#8294b2" stroke-width="0.65" stroke-linecap="round" stroke-linejoin="round" /><circle cx="10.2" cy="339.4" r="1.3" fill="none" stroke="#8294b2" stroke-width="0.65"/><circle cx="10.1" cy="355.5" r="4.0" fill="none" stroke="#8294b2" stroke-width="0.65"/><path d="M8.7 354.3 C8.7 353.3 9.4 352.8 10.1 352.8 C10.9 352.8 11.5 353.4 11.5 354.1 C11.5 355.1 10.1 355.2 10.1 356.4" fill="none" stroke="#8294b2" stroke-width="0.65" stroke-linecap="round" stroke-linejoin="round" /><circle cx="10.1" cy="357.9" r="0.4" fill="#8294b2"/><path d="M85.6 207.2 V213.6 M82.4 210.4 H88.8" fill="none" stroke="#8294b2" stroke-width="0.6" stroke-linecap="round" stroke-linejoin="round" /><path d="M82.4 226.4 H88.8" fill="none" stroke="#8294b2" stroke-width="0.6" stroke-linecap="round" stroke-linejoin="round" /><path d="M85.6 320.3 V326.7 M82.4 323.5 H88.8" fill="none" stroke="#8294b2" stroke-width="0.6" stroke-linecap="round" stroke-linejoin="round" /><circle cx="119.1" cy="184.516" r="1.1160000000000025" fill="none" stroke="#2f3036" stroke-width="0.7"/><path d="M117.5 189.3 V187.03199999999998 C117.5 186.03199999999998 118.2 185.832 119.1 185.832 C120.0 185.832 120.7 186.03199999999998 120.7 187.03199999999998 V189.3 H117.5" fill="none" stroke="#2f3036" stroke-width="0.7" stroke-linecap="round" stroke-linejoin="round" /><circle cx="122.6" cy="182.516" r="1.1160000000000025" fill="none" stroke="#2f3036" stroke-width="0.7"/><path d="M121.0 189.3 V185.03199999999998 C121.0 184.03199999999998 121.7 183.832 122.6 183.832 C123.5 183.832 124.2 184.03199999999998 124.2 185.03199999999998 V189.3 H121.0" fill="none" stroke="#2f3036" stroke-width="0.7" stroke-linecap="round" stroke-linejoin="round" /><circle cx="126.1" cy="180.516" r="1.1160000000000025" fill="none" stroke="#2f3036" stroke-width="0.7"/><path d="M124.5 189.3 V183.03199999999998 C124.5 182.03199999999998 125.2 181.832 126.1 181.832 C127.0 181.832 127.7 182.03199999999998 127.7 183.03199999999998 V189.3 H124.5" fill="none" stroke="#2f3036" stroke-width="0.7" stroke-linecap="round" stroke-linejoin="round" /><circle cx="120.1" cy="282.8" r="2.3" fill="none" stroke="#2f3036" stroke-width="0.75"/><path d="M120.1 285.1 V288.6 M118.7 287.3 H121.5" fill="none" stroke="#2f3036" stroke-width="0.75" stroke-linecap="round" stroke-linejoin="round" /><circle cx="124.9" cy="287.7" r="2.4" fill="none" stroke="#2f3036" stroke-width="0.75"/><path d="M124.9 285.3 V281.4 M123.8 282.5 L124.9 281.4 L126 282.5" fill="none" stroke="#2f3036" stroke-width="0.75" stroke-linecap="round" stroke-linejoin="round" /><circle cx="120.3" cy="361.3" r="3.0" fill="none" stroke="#2f3036" stroke-width="0.75"/><circle cx="124.3" cy="359.0" r="3.0" fill="none" stroke="#2f3036" stroke-width="0.75"/><path d="M123.3 355.6 L124.1 354.5 L124.9 355.6 Z" fill="#2f3036" stroke="#2f3036" stroke-width="0.6" stroke-linecap="round" stroke-linejoin="round" /><path d="M117.6 406.8 L119.6 403.2 L122.4 402.6 L125.2 403.2 L127.2 406.8 L125.2 410.4 L122.4 411.0 L119.6 410.4 Z" fill="none" stroke="#2f3036" stroke-width="0.7" stroke-linecap="round" stroke-linejoin="round" /><path d="M119.8 401.2 C120.8 400.8 121.8 401 122.3 402.2" fill="none" stroke="#2f3036" stroke-width="0.6" stroke-linecap="round" stroke-linejoin="round" /><circle cx="120.6" cy="405.9" r="0.45" fill="#2f3036"/><circle cx="124.1" cy="405.9" r="0.45" fill="#2f3036"/><path d="M121.2 408.4 C121.8 409 123 409 123.6 408.4" fill="none" stroke="#2f3036" stroke-width="0.55" stroke-linecap="round" stroke-linejoin="round" /><path d="M394.9 188.8 C393.2 187 391.1 185 391.1 182.9 C391.1 180.7 392.8 179.1 394.9 179.1 C397 179.1 398.7 180.7 398.7 182.9 C398.7 185 396.6 187 394.9 188.8 Z" fill="none" stroke="#2f3036" stroke-width="0.75" stroke-linecap="round" stroke-linejoin="round" /><circle cx="394.9" cy="183.0" r="1.5" fill="none" stroke="#2f3036" stroke-width="0.7"/><path d="M390.6 322.6 H395.5 L397.3 324.2 L398.8 323.6 L399.4 322.8 L399.3 325.5 L398.6 327 L398.3 328.3 L397.8 327.4 L396.2 327.7 L394.6 328.6 L393.4 327.6 L391.2 327.4 L390.5 326.6 Z" fill="none" stroke="#2f3036" stroke-width="0.75" stroke-linecap="round" stroke-linejoin="round" /><rect x="663.2" y="180.1" width="9.5" height="7.6" fill="#4a4b50"/><rect x="664.0" y="184.9" width="7.9" height="2.2" fill="#8a8b90"/><circle cx="664.6" cy="181.6" r="0.45" fill="#e8e8ea"/><circle cx="664.6" cy="183.6" r="0.45" fill="#e8e8ea"/><circle cx="666.6" cy="181.6" r="0.45" fill="#e8e8ea"/><circle cx="666.6" cy="183.6" r="0.45" fill="#e8e8ea"/><circle cx="668.7" cy="181.6" r="0.45" fill="#e8e8ea"/><circle cx="668.7" cy="183.6" r="0.45" fill="#e8e8ea"/><circle cx="670.8" cy="181.6" r="0.45" fill="#e8e8ea"/><circle cx="670.8" cy="183.6" r="0.45" fill="#e8e8ea"/><circle cx="667.7" cy="182.6" r="1.1" fill="none" stroke="#9a9ba0" stroke-width="0.5"/><path d="M666.1 321.2 H669.8 L669.0 323.2 H666.9 Z" fill="none" stroke="#2f3036" stroke-width="0.7" stroke-linecap="round" stroke-linejoin="round" /><path d="M666.9 323.4 C664.6 324.5 664.0 326.2 664.0 327.4 C664.0 329.6 665.6 330.8 667.95 330.8 C670.3 330.8 671.9 329.6 671.9 327.4 C671.9 326.2 671.3 324.5 669.0 323.4" fill="none" stroke="#2f3036" stroke-width="0.75" stroke-linecap="round" stroke-linejoin="round" /><text x="667.95" y="329.3" font-size="4.6" text-anchor="middle" fill="#2f3036" font-family="Liberation Sans" font-weight="700">$</text><path d="M195.10 105.90 L197.40 108.80 L199.70 105.90" fill="none" stroke="#75787f" stroke-width="0.6" stroke-linecap="round" stroke-linejoin="round" /><path d="M295.55 105.90 L297.85 108.80 L300.15 105.90" fill="none" stroke="#75787f" stroke-width="0.6" stroke-linecap="round" stroke-linejoin="round" /><path d="M396.00 105.90 L398.30 108.80 L400.60 105.90" fill="none" stroke="#75787f" stroke-width="0.6" stroke-linecap="round" stroke-linejoin="round" /><path d="M496.45 105.90 L498.75 108.80 L501.05 105.90" fill="none" stroke="#75787f" stroke-width="0.6" stroke-linecap="round" stroke-linejoin="round" /><path d="M596.90 105.90 L599.20 108.80 L601.50 105.90" fill="none" stroke="#75787f" stroke-width="0.6" stroke-linecap="round" stroke-linejoin="round" /><path d="M697.35 105.90 L699.65 108.80 L701.95 105.90" fill="none" stroke="#75787f" stroke-width="0.6" stroke-linecap="round" stroke-linejoin="round" /><path d="M797.80 105.90 L800.10 108.80 L802.40 105.90" fill="none" stroke="#75787f" stroke-width="0.6" stroke-linecap="round" stroke-linejoin="round" /><path d="M195.10 123.30 L197.40 126.20 L199.70 123.30" fill="none" stroke="#75787f" stroke-width="0.6" stroke-linecap="round" stroke-linejoin="round" /><path d="M295.55 123.30 L297.85 126.20 L300.15 123.30" fill="none" stroke="#75787f" stroke-width="0.6" stroke-linecap="round" stroke-linejoin="round" /><path d="M267.4 71.6 L271.2 75.4 M271.2 71.6 L267.4 75.4" fill="none" stroke="#8a8c92" stroke-width="0.55" stroke-linecap="round" stroke-linejoin="round" /><path d="M103 214.2 L101 216.5 L103 218.8" fill="none" stroke="#8a8c92" stroke-width="0.6" stroke-linecap="round" stroke-linejoin="round" /></svg>
</div></body></html>
